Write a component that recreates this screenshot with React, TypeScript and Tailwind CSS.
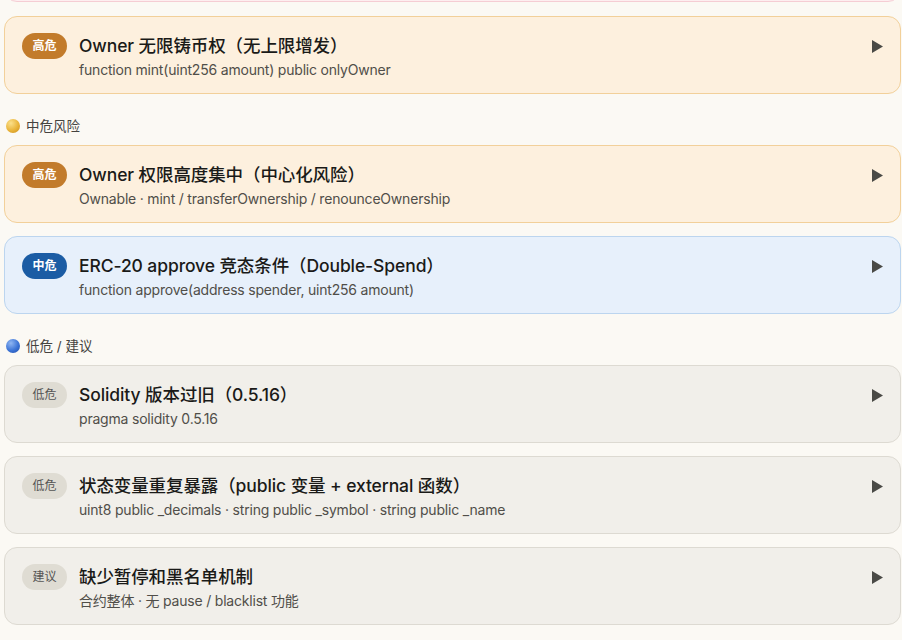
import React from 'react';

type Level = 'high' | 'mid' | 'low';

interface Finding {
    level: Level;
    badge: string;
    title: string;
    detail: string;
}

const cardStyles: Record<Level, string> = {
    high: 'bg-[#fdf0de] border-[#f2d09a]',
    mid: 'bg-[#e7f0fb] border-[#bcd5ef]',
    low: 'bg-[#f1efea] border-[#dddad2]',
};

const badgeStyles: Record<Level, string> = {
    high: 'bg-[#c27b2b] text-white font-bold',
    mid: 'bg-[#1b5ca4] text-white font-bold',
    low: 'bg-[#dfdcd3] text-[#555] font-normal',
};

function Arrow() {
    return (
        <svg width="11" height="13" viewBox="0 0 11 13" className="shrink-0 mt-[7px]">
            <path d="M0 0 L11 6.5 L0 13 Z" fill="#4a4a46" />
        </svg>
    );
}

function FindingCard({ f }: { f: Finding }) {
    return (
        <div className={`border rounded-[13px] pt-4 pb-[13px] px-[17px] flex items-start ${cardStyles[f.level]}`}>
            <span
                className={`h-[26px] px-[10.5px] rounded-full text-[12px] leading-[26px] shrink-0 ${badgeStyles[f.level]}`}
            >
                {f.badge}
            </span>
            <div className="flex-1 ml-3 min-w-0">
                <div className="text-[17.5px] leading-[26px] font-medium text-[#1a1a18] tracking-[-0.1px]">
                    {f.title}
                </div>
                <div className="text-[14px] leading-[21px] text-[#504e49] tracking-[-0.2px]">{f.detail}</div>
            </div>
            <Arrow />
        </div>
    );
}

function SectionLabel({ color, text }: { color: 'yellow' | 'blue'; text: string }) {
    const dot =
        color === 'yellow'
            ? 'bg-[radial-gradient(circle_at_35%_30%,#fbe08a,#e9b43a_55%,#c98b16)]'
            : 'bg-[radial-gradient(circle_at_35%_30%,#8fb6f2,#3c74d6_55%,#1d4aa6)]';
    return (
        <div className="flex items-center gap-[6px] h-5 mt-[22px] mb-[9px] pl-[2px]">
            <span className={`w-[14px] h-[14px] rounded-full ${dot}`}></span>
            <span className="text-[13.5px] text-[#45433f]">{text}</span>
        </div>
    );
}

const first: Finding[] = [
    { level: 'high', badge: '高危', title: 'Owner 无限铸币权（无上限增发）', detail: 'function mint(uint256 amount) public onlyOwner' },
];

const mid: Finding[] = [
    { level: 'high', badge: '高危', title: 'Owner 权限高度集中（中心化风险）', detail: 'Ownable · mint / transferOwnership / renounceOwnership' },
    { level: 'mid', badge: '中危', title: 'ERC-20 approve 竞态条件（Double-Spend）', detail: 'function approve(address spender, uint256 amount)' },
];

const low: Finding[] = [
    { level: 'low', badge: '低危', title: 'Solidity 版本过旧（0.5.16）', detail: 'pragma solidity 0.5.16' },
    { level: 'low', badge: '低危', title: '状态变量重复暴露（public 变量 + external 函数）', detail: 'uint8 public _decimals · string public _symbol · string public _name' },
    { level: 'low', badge: '建议', title: '缺少暂停和黑名单机制', detail: '合约整体 · 无 pause / blacklist 功能' },
];

export default function App() {
    return (
        <div
            className="min-h-screen bg-[#fbf9f4] overflow-hidden pl-1 pr-px"
            style={{ fontFamily: 'Inter, "Noto Sans CJK SC", sans-serif' }}
        >
            {/* tail of the card above, scrolled out of view */}
            <div className="h-[60px] -mt-[58px] border border-[#f5cdd4] bg-[#fdeef0] rounded-[13px]"></div>

            <div className="flex flex-col gap-[13px] mt-[14px]">
                {first.map((f) => (
                    <FindingCard key={f.title} f={f} />
                ))}
            </div>

            <SectionLabel color="yellow" text="中危风险" />
            <div className="flex flex-col gap-[13px]">
                {mid.map((f) => (
                    <FindingCard key={f.title} f={f} />
                ))}
            </div>

            <SectionLabel color="blue" text="低危 / 建议" />
            <div className="flex flex-col gap-[13px]">
                {low.map((f) => (
                    <FindingCard key={f.title} f={f} />
                ))}
            </div>
        </div>
    );
}
